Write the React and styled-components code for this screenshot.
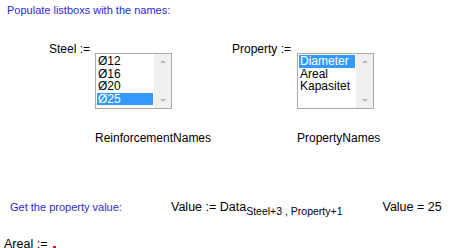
import React from "react";
import styled, { createGlobalStyle } from "styled-components";

const GlobalStyle = createGlobalStyle`
  html, body {
    margin: 0;
    padding: 0;
    background: #ffffff;
  }
  body {
    font-family: "Liberation Sans", Arial, sans-serif;
    color: #000000;
  }
`;

const Sheet = styled.div`
  width: 474px;
  height: 248px;
  overflow: hidden;
  background: #fff;
`;

const Comment = styled.div`
  color: #2a2ad8;
  font-family: "Liberation Sans", Arial, sans-serif;
  font-size: 11px;
  line-height: 13px;
  white-space: nowrap;
  width: ${(p) => (p.width ? `${p.width}px` : "auto")};
  margin-left: ${(p) => p.left}px;
`;

const Heading = styled(Comment)`
  padding-top: 4px;
`;

const ListRow = styled.div`
  display: flex;
  margin-top: 25px;
  padding-left: 49px;
`;

const Group = styled.div`
  display: grid;
  grid-template-columns: ${(p) => p.labelWidth}px 77px;
  grid-template-rows: auto auto;
  margin-right: ${(p) => p.after || 0}px;
`;

const Label = styled.div`
  font-size: 12px;
  line-height: 14px;
  white-space: nowrap;
`;

const Listbox = styled.div`
  margin-top: 11px;
  width: 77px;
  height: 56px;
  box-sizing: border-box;
  border: 1px solid #a9a9a9;
  display: flex;
  background: #fff;
`;

const Items = styled.div`
  flex: 1;
  padding: 1px 1px 0 1px;
  overflow: hidden;
`;

const Item = styled.div`
  font-size: 12px;
  line-height: 12.5px;
  height: 12.5px;
  padding-left: 1px;
  white-space: nowrap;
  background: ${(p) => (p.selected ? "#3399ff" : "transparent")};
  color: ${(p) => (p.selected ? "#ffffff" : "#000000")};
`;

const Scrollbar = styled.div`
  width: 17px;
  background: #f0f0f0;
  display: flex;
  flex-direction: column;
  justify-content: space-between;
  align-items: center;
  padding: 6px 0 6px;
`;

const Arrow = styled.div`
  width: 0;
  height: 0;
  border-left: 3px solid transparent;
  border-right: 3px solid transparent;
  ${(p) =>
    p.down
      ? "border-top: 3px solid #b8b8b8;"
      : "border-bottom: 3px solid #b8b8b8;"}
`;

const VarName = styled.div`
  grid-column: 2;
  font-size: 12px;
  line-height: 14px;
  margin-top: 22px;
  white-space: nowrap;
`;

const ValueRow = styled.div`
  display: flex;
  align-items: baseline;
  margin-top: 55px;
`;

const Expr = styled.div`
  font-size: 12.5px;
  line-height: 14px;
  white-space: nowrap;
  margin-left: ${(p) => p.left}px;
`;

const Sub = styled.span`
  font-size: 10.5px;
  position: relative;
  top: 4px;
`;

const LastRow = styled.div`
  display: flex;
  align-items: baseline;
  margin-top: 23px;
  padding-left: 4px;
`;

const Placeholder = styled.span`
  display: inline-block;
  width: 3px;
  height: 4px;
  background: #e0101a;
  margin-left: 6px;
  position: relative;
  top: 2px;
`;

const ListDef = ({ label, labelWidth, items, selected, name, after }) => (
  <Group labelWidth={labelWidth} after={after}>
    <Label>{label}</Label>
    <Listbox>
      <Items>
        {items.map((it, i) => (
          <Item key={it} selected={i === selected}>
            {it}
          </Item>
        ))}
      </Items>
      <Scrollbar>
        <Arrow />
        <Arrow down />
      </Scrollbar>
    </Listbox>
    <VarName>{name}</VarName>
  </Group>
);

export default function App() {
  return (
    <Sheet>
      <GlobalStyle />
      <Heading left={7}>Populate listboxs with the names:</Heading>
      <ListRow>
        <ListDef
          label="Steel  :="
          labelWidth={46}
          items={["Ø12", "Ø16", "Ø20", "Ø25"]}
          selected={3}
          name="ReinforcementNames"
          after={60}
        />
        <ListDef
          label="Property  :="
          labelWidth={65}
          items={["Diameter", "Areal", "Kapasitet"]}
          selected={0}
          name="PropertyNames"
        />
      </ListRow>
      <ValueRow>
        <Comment left={10} width={161}>Get the property value:</Comment>
        <Expr left={0}>
          Value := Data<Sub>Steel+3 , Property+1</Sub>
        </Expr>
        <Expr left={40}>Value = 25</Expr>
      </ValueRow>
      <LastRow>
        <Expr left={0}>Areal  :=</Expr>
        <Placeholder />
      </LastRow>
    </Sheet>
  );
}
